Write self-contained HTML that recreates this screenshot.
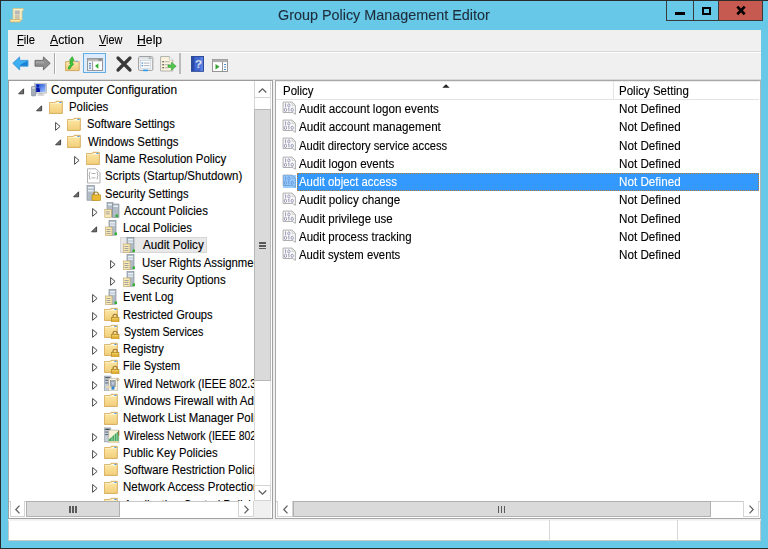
<!DOCTYPE html>
<html><head><meta charset="utf-8"><title>Group Policy Management Editor</title>
<style>
*{margin:0;padding:0;box-sizing:border-box}
html,body{width:768px;height:549px;overflow:hidden}
body{position:relative;background:#67c8e8;font-family:"Liberation Sans", sans-serif;color:#000}
.a{position:absolute}
.t{position:absolute;white-space:nowrap;font-size:11.5px;line-height:14px;color:#000;-webkit-text-stroke:0.12px currentColor}
#w{position:absolute;left:0;top:0;width:768px;height:549px;filter:blur(0.3px)}
svg{position:absolute;overflow:visible}
</style></head>
<body><div id="w">
<svg style="left:9px;top:7px" width="16" height="16" viewBox="0 0 16 16">
<path d="M4 1.5 H13.5 Q15 1.5 14.5 3 L13 4 V13 H4 Z" fill="#fbf0c4" stroke="#d8c48a" stroke-width="0.8"/>
<rect x="5.8" y="3.5" width="5" height="4" fill="#b8b8b8"/>
<rect x="5.8" y="8.5" width="5" height="1" fill="#9a9a9a"/>
<rect x="5.8" y="10.5" width="5" height="1" fill="#9a9a9a"/>
<path d="M1.5 12.5 H11 Q12.5 13.5 11 15 H1.5 Q0.5 13.7 1.5 12.5Z" fill="#fbe9a8" stroke="#d0b070" stroke-width="0.8"/>
</svg>
<div class="t" style="left:278.48px;top:4.60px;font-size:15px;line-height:20px;color:#1e2d3b;transform:scaleX(0.9586);transform-origin:0 0;">Group Policy Management Editor</div>
<div class="a" style="left:666px;top:0;width:97px;height:21px;border:1px solid #3a3a3a;border-top:none;background:#67c8e8"></div>
<div class="a" style="left:692.5px;top:0;width:1px;height:20.5px;background:#3a3a3a"></div>
<div class="a" style="left:718px;top:0;width:45px;height:21px;background:#c75a50;border:1px solid #3a3a3a;border-top:none"></div>
<div class="a" style="left:675px;top:12px;width:10px;height:2.5px;background:#000"></div>
<div class="a" style="left:702px;top:7px;width:9px;height:7.5px;border:2px solid #000;border-top-width:2.5px"></div>
<svg style="left:735.5px;top:6.3px" width="10" height="9" viewBox="0 0 10 9"><path d="M1.3 0.6 L8.7 8.2 M8.7 0.6 L1.3 8.2" stroke="#000" stroke-width="2.7"/></svg>
<div class="a" style="left:7.8px;top:30px;width:753.2px;height:511px;background:#f0f0f0"></div>
<div class="t" style="left:17.00px;top:29.54px;font-size:12px;line-height:20px;color:#000;transform:scaleX(0.9340);transform-origin:0 0;"><u style="text-decoration:underline;text-underline-offset:0.8px">F</u>ile</div>
<div class="t" style="left:50.20px;top:29.54px;font-size:12px;line-height:20px;color:#000;transform:scaleX(1.0178);transform-origin:0 0;"><u style="text-decoration:underline;text-underline-offset:0.8px">A</u>ction</div>
<div class="t" style="left:99.09px;top:29.54px;font-size:12px;line-height:20px;color:#000;transform:scaleX(0.9073);transform-origin:0 0;"><u style="text-decoration:underline;text-underline-offset:0.8px">V</u>iew</div>
<div class="t" style="left:137.12px;top:29.54px;font-size:12px;line-height:20px;color:#000;transform:scaleX(1.0190);transform-origin:0 0;"><u style="text-decoration:underline;text-underline-offset:0.8px">H</u>elp</div>
<div class="a" style="left:7.8px;top:51px;width:753.2px;height:1px;background:#d9d9d9"></div>
<div class="a" style="left:7.8px;top:52px;width:753.2px;height:1px;background:#fdfdfd"></div>
<svg style="left:12px;top:56px" width="17" height="15" viewBox="0 0 17 15">
<path d="M0.8 7.3 L7.6 0.9 V4.4 H16 V10.2 H7.6 V13.9 Z" fill="#3cb0f2" stroke="#2a8ed6" stroke-width="0.8" stroke-linejoin="round"/>
<path d="M9 8.2 L15.4 4.9 V9.7 H7.8Z" fill="#1c80d2"/>
</svg>
<svg style="left:34px;top:56px" width="17" height="15" viewBox="0 0 17 15">
<path d="M16.2 7.3 L9.4 0.9 V4.4 H1 V10.2 H9.4 V13.9 Z" fill="#8e8e8e" stroke="#666" stroke-width="0.9" stroke-linejoin="round"/>
<path d="M1.8 5.3 H10.2 V7.4 H1.8Z" fill="#a4a4a4"/>
</svg>
<div class="a" style="left:54px;top:53px;width:1px;height:21px;background:#a8a8a8"></div>
<div class="a" style="left:55px;top:53px;width:1px;height:21px;background:#fff"></div>
<svg style="left:64.5px;top:56px" width="15" height="16" viewBox="0 0 15 16">
<linearGradient id="ufg" x1="0" y1="0" x2="0" y2="1"><stop offset="0" stop-color="#fbe8b0"/><stop offset="1" stop-color="#eecb78"/></linearGradient>
<path d="M0.6 5.6 H14.2 V14.6 H0.6Z" fill="url(#ufg)" stroke="#d0a458" stroke-width="0.9"/>
<rect x="10.5" y="4.6" width="2.4" height="1.2" fill="#7ab0e0"/>
<path d="M3.2 13 Q3.2 10 5.6 8.6 Q3.8 7.2 5.8 4.6 L4.4 4.4 L7.2 0.6 L9.2 4.6 L7.8 4.6 Q6.8 6.6 8.6 8.4 Q6 10 5 13Z" fill="#3cc43c" stroke="#2a9a2a" stroke-width="0.6"/>
</svg>
<div class="a" style="left:83.4px;top:52.9px;width:22.5px;height:20.6px;background:#dcecfc;border:1px solid #62ade6"></div>
<svg style="left:87px;top:58px" width="16" height="13" viewBox="0 0 16 13">
<linearGradient id="tbg" x1="0" y1="0" x2="0" y2="1"><stop offset="0" stop-color="#a8a8a8"/><stop offset="1" stop-color="#d0d0d0"/></linearGradient>
<rect x="0.5" y="0.5" width="15" height="12" fill="#fff" stroke="#8c8c8c" stroke-width="0.9"/>
<rect x="0.9" y="0.9" width="14.2" height="2.6" fill="url(#tbg)"/>
<rect x="11.6" y="1.3" width="1" height="1.3" fill="#505050"/><rect x="13.3" y="1.3" width="1" height="1.3" fill="#505050"/>
<rect x="1" y="3.5" width="4" height="8.6" fill="#f0f0f0"/>
<rect x="5.2" y="3.5" width="0.9" height="9" fill="#8c8c8c"/>
<rect x="2" y="5.2" width="2" height="1" fill="#3a78c8"/><rect x="2" y="7.4" width="2" height="1" fill="#3a78c8"/><rect x="2" y="9.6" width="2" height="1" fill="#3a78c8"/>
<path d="M11.4 5.2 V10.8 L8 8Z" fill="#2eb02e"/>
</svg>
<svg style="left:116px;top:56px" width="16" height="16" viewBox="0 0 16 16">
<path d="M2 2 L14 14 M14 2 L2 14" stroke="#3a3a3a" stroke-width="3.2" stroke-linecap="round"/>
</svg>
<svg style="left:138px;top:56px" width="16" height="16" viewBox="0 0 16 16">
<rect x="0.6" y="0.6" width="14.2" height="13.8" rx="1.2" fill="#f6f8fa" stroke="#8e8e8e" stroke-width="0.9"/>
<rect x="1.1" y="1.1" width="13.2" height="2.4" fill="#dfe3e8"/>
<rect x="10.8" y="1.6" width="1" height="1.1" fill="#707070"/><rect x="12.4" y="1.6" width="1" height="1.1" fill="#707070"/>
<rect x="2.6" y="4.6" width="10.2" height="7.6" fill="#fff" stroke="#b8c4d0" stroke-width="0.6"/>
<rect x="3.6" y="6.4" width="1.3" height="1.3" fill="#3a88d8"/><rect x="5.6" y="6.6" width="6" height="0.9" fill="#a0a8b0"/>
<rect x="3.6" y="9" width="1.3" height="1.3" fill="#3a88d8"/><rect x="5.6" y="9.2" width="6" height="0.9" fill="#a0a8b0"/>
<rect x="5.2" y="13.6" width="4.6" height="1.6" fill="#2a9ae8"/>
</svg>
<svg style="left:160px;top:56px" width="17" height="16" viewBox="0 0 17 16">
<path d="M0.6 0.6 H9.4 L12.8 4 V15 H0.6Z" fill="#fcf4dc" stroke="#a8a8a8" stroke-width="0.9"/>
<path d="M9.4 0.6 V4 H12.8" fill="#fff" stroke="#b8b8b8" stroke-width="0.7"/>
<rect x="2.4" y="5" width="1.4" height="1.4" fill="#505050"/><rect x="4.6" y="5.3" width="5" height="0.9" fill="#a8a8a8"/>
<rect x="2.4" y="8" width="1.4" height="1.4" fill="#505050"/><rect x="4.6" y="8.3" width="5" height="0.9" fill="#a8a8a8"/>
<rect x="2.4" y="11" width="1.4" height="1.4" fill="#505050"/><rect x="4.6" y="11.3" width="3.6" height="0.9" fill="#a8a8a8"/>
<path d="M8 9 H11.4 V6.2 L16.2 10.2 L11.4 14.2 V11.4 H8Z" fill="#52c452" stroke="#34a034" stroke-width="0.6" stroke-linejoin="round"/>
</svg>
<div class="a" style="left:179.3px;top:53px;width:1.3px;height:20.5px;background:#bcbcbc"></div>
<svg style="left:191px;top:56px" width="13" height="16" viewBox="0 0 13 16">
<rect x="0.5" y="0.5" width="12" height="14.8" fill="#4068d4" stroke="#23408e" stroke-width="0.9"/>
<rect x="1" y="1" width="2.4" height="14" fill="#2a4aa8"/>
<rect x="9.5" y="1" width="2.5" height="14" fill="#5a82e4"/>
<text x="7.4" y="12.4" font-family="Liberation Sans" font-size="11.5" font-weight="bold" fill="#eef2fa" stroke="#8898c0" stroke-width="0.3" text-anchor="middle">?</text>
</svg>
<svg style="left:212px;top:58.5px" width="16" height="13" viewBox="0 0 16 13">
<rect x="0.5" y="0.5" width="15" height="12" fill="#fff" stroke="#8a8a8a" stroke-width="0.9"/>
<rect x="0.5" y="0.5" width="15" height="2.6" fill="#b0b0b0"/>
<rect x="10" y="3" width="0.9" height="9.5" fill="#8a8a8a"/>
<path d="M3.5 5 V10.5 L7.5 7.75Z" fill="#30a030"/>
<rect x="12" y="5" width="2" height="1" fill="#4a90d0"/><rect x="12" y="7.5" width="2" height="1" fill="#4a90d0"/><rect x="12" y="10" width="2" height="1" fill="#4a90d0"/>
</svg>
<div class="a" style="left:7.8px;top:79px;width:753.2px;height:1px;background:#d8d8d8"></div>
<div class="a" style="left:8px;top:80px;width:265px;height:439px;background:#fff;border:1px solid #a0a0a0;border-top-color:#9c9c9c"></div>
<div class="a" style="left:275.2px;top:80px;width:485.8px;height:439px;background:#fff;border:1px solid #a8a8a8;border-right-color:#b4b4b4"></div>
<div class="a" style="left:8px;top:519.5px;width:752.8px;height:21.2px;background:#fff;border:1px solid #c8c8c8;border-top:1px solid #f4f4f4"></div>
<div class="a" style="left:549px;top:520px;width:1px;height:20.5px;background:#d8d8d8"></div>
<div class="a" style="left:677px;top:520px;width:1px;height:20.5px;background:#d8d8d8"></div>
<svg width="0" height="0" style="position:absolute">
<defs>
<linearGradient id="fg" x1="0" y1="0" x2="0" y2="1"><stop offset="0" stop-color="#fde8a8"/><stop offset="1" stop-color="#f2cf7a"/></linearGradient>
<symbol id="folder" viewBox="0 0 16 16">
<path d="M0.3 3.6 H6 L7 2.3 H13.3 V14.4 H0.3Z" fill="url(#fg)" stroke="#d4a652" stroke-width="0.9" stroke-linejoin="round"/>
<path d="M0.8 4.4 H12.8" stroke="#fff4d0" stroke-width="0.8"/>
<path d="M7.8 3 H12.4 V3.9 H7.8Z" fill="#fff"/><path d="M10.4 2.9 H12.5 V4 H10.4Z" fill="#4a98e0"/>
</symbol>
<symbol id="flock" viewBox="0 0 16 16">
<path d="M0.3 3.6 H6 L7 2.3 H13.3 V14.4 H0.3Z" fill="url(#fg)" stroke="#d4a652" stroke-width="0.9" stroke-linejoin="round"/>
<path d="M0.8 4.4 H12.8" stroke="#fff4d0" stroke-width="0.8"/>
<path d="M7.8 3 H12.4 V3.9 H7.8Z" fill="#fff"/><path d="M10.4 2.9 H12.5 V4 H10.4Z" fill="#4a98e0"/>
<path d="M9 11.8 V10.3 Q9 8.3 11.1 8.3 Q13.2 8.3 13.2 10.3 V11.8" fill="none" stroke="#9a7428" stroke-width="1.1"/>
<rect x="7.4" y="11.4" width="7.6" height="4.8" fill="#deb038" stroke="#a8821c" stroke-width="0.6"/>
<rect x="8" y="12" width="6.4" height="1.3" fill="#f0cc60"/>
</symbol>
<symbol id="computer" viewBox="0 0 16 16">
<linearGradient id="scr" x1="0" y1="0" x2="1" y2="1"><stop offset="0" stop-color="#1040d0"/><stop offset="1" stop-color="#a8c8ff"/></linearGradient>
<rect x="3.6" y="2.2" width="12" height="10" fill="#e0e0e0" stroke="#a8a8a8" stroke-width="0.6"/>
<rect x="4.6" y="3.1" width="10" height="8" fill="url(#scr)"/>
<circle cx="7" cy="4.8" r="1.3" fill="#0818a8"/><path d="M4.6 11.1 V8 Q5.5 6.4 7.2 6.6 Q8.8 7 9 9 V11.1Z" fill="#0818a8"/>
<rect x="8" y="12.2" width="3.5" height="1.3" fill="#b8b8b8"/><rect x="6.4" y="13.5" width="6.8" height="1.2" fill="#c8c8c8"/>
<rect x="0.4" y="5.5" width="4.4" height="9.4" rx="0.8" fill="#a4aebb" stroke="#7a8494" stroke-width="0.6"/>
<rect x="1.2" y="6.5" width="2.8" height="1" fill="#e8eef4"/>
</symbol>
<symbol id="scripts" viewBox="0 0 16 16">
<path d="M1.5 0.8 H10 L14 4.8 V15 H1.5Z" fill="#fff" stroke="#a8a8a8" stroke-width="0.9"/>
<path d="M4.5 4 Q3 4 3.5 5.5 Q3.8 7 3 7.5 Q3.8 8 3.5 9.5 Q3 11 4.5 11" fill="none" stroke="#909090" stroke-width="0.8"/>
<path d="M10.5 4 Q12 4 11.5 5.5 Q11.2 7 12 7.5 Q11.2 8 11.5 9.5 Q12 11 10.5 11" fill="none" stroke="#909090" stroke-width="0.8"/>
<rect x="5.5" y="5" width="4" height="0.8" fill="#a0a0a0"/><rect x="5.5" y="9.5" width="4" height="0.8" fill="#a0a0a0"/>
</symbol>
<symbol id="seclock" viewBox="0 0 16 16">
<rect x="1" y="0.6" width="7.5" height="14.6" fill="#b2bcc6" stroke="#7c8690" stroke-width="0.6"/>
<rect x="2" y="2" width="5.5" height="1.5" fill="#e8f0f8"/><rect x="2" y="5" width="5.5" height="1.5" fill="#e8f0f8"/>
<path d="M7.5 10 Q7.5 7 10 7 Q12.5 7 12.5 10" fill="none" stroke="#a08020" stroke-width="1.2"/>
<rect x="6" y="9.8" width="8.5" height="5.8" fill="#e8b830" stroke="#b08818" stroke-width="0.6"/>
</symbol>
<symbol id="server" viewBox="0 0 16 16">
<rect x="5" y="0.6" width="7" height="14.6" fill="#b2bcc6" stroke="#7c8690" stroke-width="0.6"/>
<rect x="6" y="2" width="5" height="1.5" fill="#e8f0f8"/><rect x="6" y="4.5" width="5" height="1.3" fill="#e8f0f8"/>
<rect x="1.5" y="7" width="6.5" height="8.5" fill="#f8eab8" stroke="#c0a060" stroke-width="0.6"/>
<rect x="2.5" y="9" width="4" height="0.8" fill="#909090"/><rect x="2.5" y="11" width="4" height="0.8" fill="#909090"/><rect x="2.5" y="13" width="4" height="0.8" fill="#909090"/>
<rect x="10.5" y="12.5" width="2.5" height="2.5" fill="#30b030"/>
</symbol>
<symbol id="server2" viewBox="0 0 16 16">
<rect x="3" y="0.6" width="6" height="14" fill="#b2bcc6" stroke="#7c8690" stroke-width="0.6"/>
<rect x="8.5" y="2" width="6.5" height="13.5" fill="#b2bcc6" stroke="#7c8690" stroke-width="0.6"/>
<rect x="9.5" y="3.5" width="4.5" height="1.5" fill="#e8f0f8"/><rect x="4" y="2" width="4" height="1.3" fill="#e8f0f8"/>
<rect x="0.8" y="7.5" width="6.5" height="8" fill="#f8eab8" stroke="#c0a060" stroke-width="0.6"/>
<rect x="1.8" y="9.5" width="4" height="0.8" fill="#909090"/><rect x="1.8" y="11.5" width="4" height="0.8" fill="#909090"/>
<rect x="11.5" y="12.5" width="2.5" height="2.5" fill="#30b030"/>
</symbol>
<symbol id="wired" viewBox="0 0 16 16">
<rect x="0.2" y="1.1" width="6.8" height="15" fill="#c4ccd4" stroke="#8a949e" stroke-width="0.6"/>
<rect x="1.2" y="2.2" width="4.8" height="1" fill="#404a56"/><rect x="1.2" y="4.8" width="4.8" height="0.9" fill="#505a66"/><rect x="1.2" y="7.5" width="4.8" height="0.9" fill="#505a66"/>
<path d="M4.6 3.3 H13.6 V15.8 H4.6Z" fill="#fbf3d6" stroke="#a8a8a8" stroke-width="0.6"/>
<circle cx="13.8" cy="4.6" r="1.1" fill="none" stroke="#b08a40" stroke-width="0.7"/>
<rect x="6.4" y="5.6" width="4.8" height="6.2" fill="#9aa8bc" stroke="#6c7888" stroke-width="0.5"/>
<path d="M8 7 L8.8 9.5 L9.6 7" stroke="#e8eef4" stroke-width="0.6" fill="none"/>
<rect x="7.4" y="11.8" width="3" height="2.8" fill="#2a84d8"/>
<rect x="2.4" y="11.2" width="4.8" height="1.8" fill="#f0d8a8"/>
</symbol>
<symbol id="wireless" viewBox="0 0 16 16">
<rect x="0.2" y="0.9" width="6.6" height="14" fill="#c4ccd4" stroke="#8a949e" stroke-width="0.6"/>
<rect x="1.2" y="1.8" width="4.6" height="1.1" fill="#303a46"/><rect x="1.2" y="4.6" width="4.6" height="0.9" fill="#505a66"/><rect x="1.2" y="7.2" width="4.6" height="0.9" fill="#505a66"/>
<path d="M4.6 3.1 H14.8 V16 H4.6Z" fill="#fbf3d6" stroke="#a8a8a8" stroke-width="0.6"/>
<path d="M4.8 12.6 L14.6 4 V14.2 H4.8Z" fill="#46a860"/>
<path d="M8 14 V10.2 M10.4 14 V8 M12.8 14 V6" stroke="#c8e8d0" stroke-width="0.7"/>
<rect x="5.6" y="14.2" width="8.6" height="1.7" fill="#e8d4a8"/>
<rect x="14.2" y="3.6" width="1" height="5" fill="#9a6a28"/>
</symbol>
<symbol id="binary" viewBox="0 0 18 18">
<path d="M2.1 2.1 H11.1 L14.4 5.4 V14.3 L11.6 12.5 H2.1Z" fill="#fafafa" stroke="#ababab" stroke-width="0.95"/>
<path d="M11.1 2.1 V5.4 H14.4" fill="none" stroke="#bdbdbd" stroke-width="0.7"/>
<g fill="none" stroke="#8c8cae" stroke-width="0.85">
<path d="M4.6 3.7 V7.2 M3.9 4.3 L4.6 3.7"/><ellipse cx="7.9" cy="5.45" rx="1.15" ry="1.65"/>
<ellipse cx="4.5" cy="9.8" rx="1.15" ry="1.65"/><path d="M7.9 8.1 V11.5 M7.2 8.7 L7.9 8.1"/><ellipse cx="11.2" cy="9.8" rx="1.15" ry="1.65"/>
</g>
</symbol>
</defs></svg>
<div class="a" style="left:9px;top:81px;width:245.5px;height:420px;overflow:hidden"><svg style="left:9.20px;top:6.60px" width="7" height="7" viewBox="0 0 7 7"><path d="M5.6 0.8 V5.8 H0.6Z" fill="#707070" stroke="#383838" stroke-width="0.9" stroke-linejoin="round"/></svg><svg style="left:21.80px;top:0.30px" width="16" height="16"><use href="#computer"/></svg><div class="t" style="left:41.81px;top:-1.08px;font-size:12px;line-height:20px;color:#000;transform:scaleX(0.9889);transform-origin:0 0;">Computer Configuration</div><svg style="left:27.44px;top:23.88px" width="7" height="7" viewBox="0 0 7 7"><path d="M5.6 0.8 V5.8 H0.6Z" fill="#707070" stroke="#383838" stroke-width="0.9" stroke-linejoin="round"/></svg><svg style="left:40.04px;top:17.58px" width="16" height="16"><use href="#folder"/></svg><div class="t" style="left:59.59px;top:16.20px;font-size:12px;line-height:20px;color:#000;transform:scaleX(0.9510);transform-origin:0 0;">Policies</div><svg style="left:46.28px;top:40.56px" width="6" height="9" viewBox="0 0 6 9"><path d="M0.6 0.5 L5.1 4.4 L0.6 8.3Z" fill="none" stroke="#4a4a4a" stroke-width="1"/></svg><svg style="left:58.28px;top:34.86px" width="16" height="16"><use href="#folder"/></svg><div class="t" style="left:77.94px;top:33.48px;font-size:12px;line-height:20px;color:#000;transform:scaleX(0.9344);transform-origin:0 0;">Software Settings</div><svg style="left:45.68px;top:58.44px" width="7" height="7" viewBox="0 0 7 7"><path d="M5.6 0.8 V5.8 H0.6Z" fill="#707070" stroke="#383838" stroke-width="0.9" stroke-linejoin="round"/></svg><svg style="left:58.28px;top:52.14px" width="16" height="16"><use href="#folder"/></svg><div class="t" style="left:78.50px;top:50.76px;font-size:12px;line-height:20px;color:#000;transform:scaleX(0.9482);transform-origin:0 0;">Windows Settings</div><svg style="left:64.52px;top:75.12px" width="6" height="9" viewBox="0 0 6 9"><path d="M0.6 0.5 L5.1 4.4 L0.6 8.3Z" fill="none" stroke="#4a4a4a" stroke-width="1"/></svg><svg style="left:76.52px;top:69.42px" width="16" height="16"><use href="#folder"/></svg><div class="t" style="left:96.09px;top:68.04px;font-size:12px;line-height:20px;color:#000;transform:scaleX(0.9520);transform-origin:0 0;">Name Resolution Policy</div><svg style="left:76.52px;top:86.70px" width="16" height="16"><use href="#scripts"/></svg><div class="t" style="left:96.43px;top:85.32px;font-size:12px;line-height:20px;color:#000;transform:scaleX(0.9572);transform-origin:0 0;">Scripts (Startup/Shutdown)</div><svg style="left:63.92px;top:110.28px" width="7" height="7" viewBox="0 0 7 7"><path d="M5.6 0.8 V5.8 H0.6Z" fill="#707070" stroke="#383838" stroke-width="0.9" stroke-linejoin="round"/></svg><svg style="left:76.52px;top:103.98px" width="16" height="16"><use href="#seclock"/></svg><div class="t" style="left:96.44px;top:102.60px;font-size:12px;line-height:20px;color:#000;transform:scaleX(0.9277);transform-origin:0 0;">Security Settings</div><svg style="left:82.76px;top:126.96px" width="6" height="9" viewBox="0 0 6 9"><path d="M0.6 0.5 L5.1 4.4 L0.6 8.3Z" fill="none" stroke="#4a4a4a" stroke-width="1"/></svg><svg style="left:94.76px;top:121.26px" width="16" height="16"><use href="#server2"/></svg><div class="t" style="left:115.20px;top:119.88px;font-size:12px;line-height:20px;color:#000;transform:scaleX(0.9532);transform-origin:0 0;">Account Policies</div><svg style="left:82.16px;top:144.84px" width="7" height="7" viewBox="0 0 7 7"><path d="M5.6 0.8 V5.8 H0.6Z" fill="#707070" stroke="#383838" stroke-width="0.9" stroke-linejoin="round"/></svg><svg style="left:94.76px;top:138.54px" width="16" height="16"><use href="#server"/></svg><div class="t" style="left:114.30px;top:137.16px;font-size:12px;line-height:20px;color:#000;transform:scaleX(0.9375);transform-origin:0 0;">Local Policies</div><div class="a" style="left:111.40px;top:155.92px;width:87px;height:16.5px;background:#e8e8e8;border:1px solid #d6d6d6"></div><svg style="left:113.00px;top:155.82px" width="16" height="16"><use href="#server"/></svg><div class="t" style="left:133.60px;top:154.44px;font-size:12px;line-height:20px;color:#000;transform:scaleX(0.9690);transform-origin:0 0;">Audit Policy</div><svg style="left:101.00px;top:178.80px" width="6" height="9" viewBox="0 0 6 9"><path d="M0.6 0.5 L5.1 4.4 L0.6 8.3Z" fill="none" stroke="#4a4a4a" stroke-width="1"/></svg><svg style="left:113.00px;top:173.10px" width="16" height="16"><use href="#server"/></svg><div class="t" style="left:132.69px;top:171.72px;font-size:12px;line-height:20px;color:#000;transform:scaleX(0.9451);transform-origin:0 0;">User Rights Assignment</div><svg style="left:101.00px;top:196.08px" width="6" height="9" viewBox="0 0 6 9"><path d="M0.6 0.5 L5.1 4.4 L0.6 8.3Z" fill="none" stroke="#4a4a4a" stroke-width="1"/></svg><svg style="left:113.00px;top:190.38px" width="16" height="16"><use href="#server"/></svg><div class="t" style="left:133.03px;top:189.00px;font-size:12px;line-height:20px;color:#000;transform:scaleX(0.9494);transform-origin:0 0;">Security Options</div><svg style="left:82.76px;top:213.36px" width="6" height="9" viewBox="0 0 6 9"><path d="M0.6 0.5 L5.1 4.4 L0.6 8.3Z" fill="none" stroke="#4a4a4a" stroke-width="1"/></svg><svg style="left:94.76px;top:207.66px" width="16" height="16"><use href="#server"/></svg><div class="t" style="left:114.30px;top:206.28px;font-size:12px;line-height:20px;color:#000;transform:scaleX(0.9346);transform-origin:0 0;">Event Log</div><svg style="left:82.76px;top:230.64px" width="6" height="9" viewBox="0 0 6 9"><path d="M0.6 0.5 L5.1 4.4 L0.6 8.3Z" fill="none" stroke="#4a4a4a" stroke-width="1"/></svg><svg style="left:94.76px;top:224.94px" width="16" height="16"><use href="#flock"/></svg><div class="t" style="left:114.31px;top:223.56px;font-size:12px;line-height:20px;color:#000;transform:scaleX(0.9267);transform-origin:0 0;">Restricted Groups</div><svg style="left:82.76px;top:247.92px" width="6" height="9" viewBox="0 0 6 9"><path d="M0.6 0.5 L5.1 4.4 L0.6 8.3Z" fill="none" stroke="#4a4a4a" stroke-width="1"/></svg><svg style="left:94.76px;top:242.22px" width="16" height="16"><use href="#flock"/></svg><div class="t" style="left:115.37px;top:240.84px;font-size:12px;line-height:20px;color:#000;transform:scaleX(0.8877);transform-origin:0 0;">System Services</div><svg style="left:82.76px;top:265.20px" width="6" height="9" viewBox="0 0 6 9"><path d="M0.6 0.5 L5.1 4.4 L0.6 8.3Z" fill="none" stroke="#4a4a4a" stroke-width="1"/></svg><svg style="left:94.76px;top:259.50px" width="16" height="16"><use href="#flock"/></svg><div class="t" style="left:114.31px;top:258.12px;font-size:12px;line-height:20px;color:#000;transform:scaleX(0.9264);transform-origin:0 0;">Registry</div><svg style="left:82.76px;top:282.48px" width="6" height="9" viewBox="0 0 6 9"><path d="M0.6 0.5 L5.1 4.4 L0.6 8.3Z" fill="none" stroke="#4a4a4a" stroke-width="1"/></svg><svg style="left:94.76px;top:276.78px" width="16" height="16"><use href="#flock"/></svg><div class="t" style="left:114.33px;top:275.40px;font-size:12px;line-height:20px;color:#000;transform:scaleX(0.9104);transform-origin:0 0;">File System</div><svg style="left:82.76px;top:299.76px" width="6" height="9" viewBox="0 0 6 9"><path d="M0.6 0.5 L5.1 4.4 L0.6 8.3Z" fill="none" stroke="#4a4a4a" stroke-width="1"/></svg><svg style="left:94.76px;top:294.06px" width="16" height="16"><use href="#wired"/></svg><div class="t" style="left:115.20px;top:292.68px;font-size:12px;line-height:20px;color:#000;transform:scaleX(0.9017);transform-origin:0 0;">Wired Network (IEEE 802.3) Policies</div><svg style="left:82.76px;top:317.04px" width="6" height="9" viewBox="0 0 6 9"><path d="M0.6 0.5 L5.1 4.4 L0.6 8.3Z" fill="none" stroke="#4a4a4a" stroke-width="1"/></svg><svg style="left:94.76px;top:311.34px" width="16" height="16"><use href="#folder"/></svg><div class="t" style="left:115.20px;top:309.96px;font-size:12px;line-height:20px;color:#000;transform:scaleX(0.9598);transform-origin:0 0;">Windows Firewall with Advanced Security</div><svg style="left:94.76px;top:328.62px" width="16" height="16"><use href="#folder"/></svg><div class="t" style="left:114.29px;top:327.24px;font-size:12px;line-height:20px;color:#000;transform:scaleX(0.9476);transform-origin:0 0;">Network List Manager Policies</div><svg style="left:82.76px;top:351.60px" width="6" height="9" viewBox="0 0 6 9"><path d="M0.6 0.5 L5.1 4.4 L0.6 8.3Z" fill="none" stroke="#4a4a4a" stroke-width="1"/></svg><svg style="left:94.76px;top:345.90px" width="16" height="16"><use href="#wireless"/></svg><div class="t" style="left:115.20px;top:344.52px;font-size:12px;line-height:20px;color:#000;transform:scaleX(0.8729);transform-origin:0 0;">Wireless Network (IEEE 802.11) Policies</div><svg style="left:82.76px;top:368.88px" width="6" height="9" viewBox="0 0 6 9"><path d="M0.6 0.5 L5.1 4.4 L0.6 8.3Z" fill="none" stroke="#4a4a4a" stroke-width="1"/></svg><svg style="left:94.76px;top:363.18px" width="16" height="16"><use href="#folder"/></svg><div class="t" style="left:114.30px;top:361.80px;font-size:12px;line-height:20px;color:#000;transform:scaleX(0.9324);transform-origin:0 0;">Public Key Policies</div><svg style="left:82.76px;top:386.16px" width="6" height="9" viewBox="0 0 6 9"><path d="M0.6 0.5 L5.1 4.4 L0.6 8.3Z" fill="none" stroke="#4a4a4a" stroke-width="1"/></svg><svg style="left:94.76px;top:380.46px" width="16" height="16"><use href="#folder"/></svg><div class="t" style="left:114.64px;top:379.08px;font-size:12px;line-height:20px;color:#000;transform:scaleX(0.9401);transform-origin:0 0;">Software Restriction Policies</div><svg style="left:82.76px;top:403.44px" width="6" height="9" viewBox="0 0 6 9"><path d="M0.6 0.5 L5.1 4.4 L0.6 8.3Z" fill="none" stroke="#4a4a4a" stroke-width="1"/></svg><svg style="left:94.76px;top:397.74px" width="16" height="16"><use href="#folder"/></svg><div class="t" style="left:114.28px;top:396.36px;font-size:12px;line-height:20px;color:#000;transform:scaleX(0.9557);transform-origin:0 0;">Network Access Protection</div><svg style="left:82.76px;top:420.72px" width="6" height="9" viewBox="0 0 6 9"><path d="M0.6 0.5 L5.1 4.4 L0.6 8.3Z" fill="none" stroke="#4a4a4a" stroke-width="1"/></svg><svg style="left:94.76px;top:415.02px" width="16" height="16"><use href="#folder"/></svg><div class="t" style="left:115.20px;top:413.64px;font-size:12px;line-height:20px;color:#000;transform:scaleX(0.9550);transform-origin:0 0;">Application Control Policies</div></div>
<div class="a" style="left:253.7px;top:81px;width:17px;height:420px;background:#fff;border-left:1px solid #d8d8d8;border-right:1px solid #e0e0e0"></div>
<div class="a" style="left:253.7px;top:81.5px;width:17px;height:16px;background:#fff;border:1px solid #d4d4d4;border-top:none"></div>
<svg style="left:258.3px;top:87.8px" width="9" height="5" viewBox="0 0 9 5"><path d="M0.7 4.5 L4.5 0.8 L8.3 4.5" fill="none" stroke="#5c5c5c" stroke-width="1.2"/></svg>
<div class="a" style="left:253.7px;top:109.1px;width:17px;height:272px;background:#dadada;border:1px solid #b8b8b8"></div>
<div class="a" style="left:259px;top:242.1px;width:7px;height:1.5px;background:#5a5a5a"></div>
<div class="a" style="left:259px;top:245.0px;width:7px;height:1.5px;background:#5a5a5a"></div>
<div class="a" style="left:259px;top:247.9px;width:7px;height:1.5px;background:#5a5a5a"></div>
<div class="a" style="left:253.7px;top:485px;width:17px;height:16px;background:#fff;border:1px solid #d4d4d4"></div>
<svg style="left:258.3px;top:490.3px" width="9" height="5" viewBox="0 0 9 5"><path d="M0.7 0.5 L4.5 4.2 L8.3 0.5" fill="none" stroke="#5c5c5c" stroke-width="1.2"/></svg>
<div class="a" style="left:9px;top:501.2px;width:245px;height:16.5px;background:#fff;border-top:1px solid #c8c8c8"></div>
<div class="a" style="left:9.9px;top:501.2px;width:15.6px;height:15.6px;background:#fff;border:1px solid #d4d4d4;border-top:none"></div>
<svg style="left:15px;top:505px" width="5" height="9" viewBox="0 0 5 9"><path d="M4.5 0.7 L0.8 4.5 L4.5 8.3" fill="none" stroke="#5c5c5c" stroke-width="1.2"/></svg>
<div class="a" style="left:25.5px;top:501.2px;width:94.5px;height:15.6px;background:#dadada;border:1px solid #b0b0b0"></div>
<div class="a" style="left:69.4px;top:505.8px;width:1.6px;height:7px;background:#5a5a5a"></div>
<div class="a" style="left:72.2px;top:505.8px;width:1.6px;height:7px;background:#5a5a5a"></div>
<div class="a" style="left:75.0px;top:505.8px;width:1.6px;height:7px;background:#5a5a5a"></div>
<div class="a" style="left:238.4px;top:501.2px;width:15.6px;height:15.6px;background:#fff;border:1px solid #d4d4d4;border-top:none"></div>
<svg style="left:243.5px;top:505px" width="5" height="9" viewBox="0 0 5 9"><path d="M0.5 0.7 L4.2 4.5 L0.5 8.3" fill="none" stroke="#5c5c5c" stroke-width="1.2"/></svg>
<div class="a" style="left:253.7px;top:501px;width:17.3px;height:17px;background:#f0f0f0"></div>
<div class="a" style="left:276.2px;top:81px;width:483px;height:18.5px;background:#fff;border-bottom:1px solid #e3e3e3;border-top:1px solid #ececec"></div>
<div class="a" style="left:613px;top:81px;width:1px;height:18px;background:#e5e5e5"></div>
<div class="t" style="left:282.59px;top:80.88px;font-size:12px;line-height:20px;color:#000;transform:scaleX(0.9528);transform-origin:0 0;">Policy</div>
<svg style="left:441.5px;top:84.3px" width="8" height="4" viewBox="0 0 8 4"><path d="M0.3 3.8 L4 0.2 L7.7 3.8Z" fill="#222"/></svg>
<div class="t" style="left:618.98px;top:80.88px;font-size:12px;line-height:20px;color:#000;transform:scaleX(0.9602);transform-origin:0 0;">Policy Setting</div>
<svg style="left:281px;top:100.00px" width="18" height="18"><use href="#binary"/></svg>
<div class="t" style="left:299.20px;top:99.12px;font-size:12px;line-height:20px;color:#000;transform:scaleX(0.9712);transform-origin:0 0;">Audit account logon events</div>
<div class="t" style="left:619.07px;top:99.12px;font-size:12px;line-height:20px;color:#000;transform:scaleX(0.9728);transform-origin:0 0;">Not Defined</div>
<svg style="left:281px;top:118.24px" width="18" height="18"><use href="#binary"/></svg>
<div class="t" style="left:299.20px;top:117.36px;font-size:12px;line-height:20px;color:#000;transform:scaleX(0.9710);transform-origin:0 0;">Audit account management</div>
<div class="t" style="left:619.07px;top:117.36px;font-size:12px;line-height:20px;color:#000;transform:scaleX(0.9728);transform-origin:0 0;">Not Defined</div>
<svg style="left:281px;top:136.48px" width="18" height="18"><use href="#binary"/></svg>
<div class="t" style="left:299.20px;top:135.60px;font-size:12px;line-height:20px;color:#000;transform:scaleX(0.9338);transform-origin:0 0;">Audit directory service access</div>
<div class="t" style="left:619.07px;top:135.60px;font-size:12px;line-height:20px;color:#000;transform:scaleX(0.9728);transform-origin:0 0;">Not Defined</div>
<svg style="left:281px;top:154.72px" width="18" height="18"><use href="#binary"/></svg>
<div class="t" style="left:299.20px;top:153.84px;font-size:12px;line-height:20px;color:#000;transform:scaleX(0.9646);transform-origin:0 0;">Audit logon events</div>
<div class="t" style="left:619.07px;top:153.84px;font-size:12px;line-height:20px;color:#000;transform:scaleX(0.9728);transform-origin:0 0;">Not Defined</div>
<div class="a" style="left:296.8px;top:173.46px;width:462.5px;height:17.3px;background:#3399ff;outline:1px dotted #b07a3a;outline-offset:-1px"></div>
<svg style="left:281px;top:172.96px" width="18" height="18"><use href="#binary"/></svg>
<div class="a" style="left:282.6px;top:174.66px;width:13.2px;height:12.9px;background:#3399ff;opacity:0.5"></div>
<div class="t" style="left:299.20px;top:172.08px;font-size:12px;line-height:20px;color:#fff;transform:scaleX(0.9460);transform-origin:0 0;">Audit object access</div>
<div class="t" style="left:619.07px;top:172.08px;font-size:12px;line-height:20px;color:#fff;transform:scaleX(0.9728);transform-origin:0 0;">Not Defined</div>
<svg style="left:281px;top:191.20px" width="18" height="18"><use href="#binary"/></svg>
<div class="t" style="left:299.20px;top:190.32px;font-size:12px;line-height:20px;color:#000;transform:scaleX(0.9733);transform-origin:0 0;">Audit policy change</div>
<div class="t" style="left:619.07px;top:190.32px;font-size:12px;line-height:20px;color:#000;transform:scaleX(0.9728);transform-origin:0 0;">Not Defined</div>
<svg style="left:281px;top:209.44px" width="18" height="18"><use href="#binary"/></svg>
<div class="t" style="left:299.20px;top:208.56px;font-size:12px;line-height:20px;color:#000;transform:scaleX(0.9553);transform-origin:0 0;">Audit privilege use</div>
<div class="t" style="left:619.07px;top:208.56px;font-size:12px;line-height:20px;color:#000;transform:scaleX(0.9728);transform-origin:0 0;">Not Defined</div>
<svg style="left:281px;top:227.68px" width="18" height="18"><use href="#binary"/></svg>
<div class="t" style="left:299.20px;top:226.80px;font-size:12px;line-height:20px;color:#000;transform:scaleX(0.9536);transform-origin:0 0;">Audit process tracking</div>
<div class="t" style="left:619.07px;top:226.80px;font-size:12px;line-height:20px;color:#000;transform:scaleX(0.9728);transform-origin:0 0;">Not Defined</div>
<svg style="left:281px;top:245.92px" width="18" height="18"><use href="#binary"/></svg>
<div class="t" style="left:299.20px;top:245.04px;font-size:12px;line-height:20px;color:#000;transform:scaleX(0.9428);transform-origin:0 0;">Audit system events</div>
<div class="t" style="left:619.07px;top:245.04px;font-size:12px;line-height:20px;color:#000;transform:scaleX(0.9728);transform-origin:0 0;">Not Defined</div>
<div class="a" style="left:276.2px;top:501.2px;width:484px;height:16.5px;background:#fff;border-top:1px solid #c8c8c8"></div>
<div class="a" style="left:277px;top:501.2px;width:16.4px;height:15.6px;background:#fff;border:1px solid #d4d4d4;border-top:none"></div>
<svg style="left:282.5px;top:505px" width="5" height="9" viewBox="0 0 5 9"><path d="M4.5 0.7 L0.8 4.5 L4.5 8.3" fill="none" stroke="#5c5c5c" stroke-width="1.2"/></svg>
<div class="a" style="left:293.4px;top:501.2px;width:417.6px;height:15.6px;background:#dadada;border:1px solid #b0b0b0"></div>
<div class="a" style="left:497.9px;top:505.8px;width:1.6px;height:7px;background:#5a5a5a"></div>
<div class="a" style="left:500.7px;top:505.8px;width:1.6px;height:7px;background:#5a5a5a"></div>
<div class="a" style="left:503.5px;top:505.8px;width:1.6px;height:7px;background:#5a5a5a"></div>
<div class="a" style="left:743px;top:501.2px;width:16px;height:15.6px;background:#fff;border:1px solid #d4d4d4;border-top:none"></div>
<svg style="left:748.5px;top:505px" width="5" height="9" viewBox="0 0 5 9"><path d="M0.5 0.7 L4.2 4.5 L0.5 8.3" fill="none" stroke="#5c5c5c" stroke-width="1.2"/></svg>
<div class="a" style="left:0;top:0;width:768px;height:1px;background:#2b2b2b"></div>
<div class="a" style="left:0;top:0;width:1px;height:549px;background:#2b2b2b"></div>
<div class="a" style="left:0;top:548px;width:768px;height:1px;background:#2b2b2b"></div>
</div></body></html>
